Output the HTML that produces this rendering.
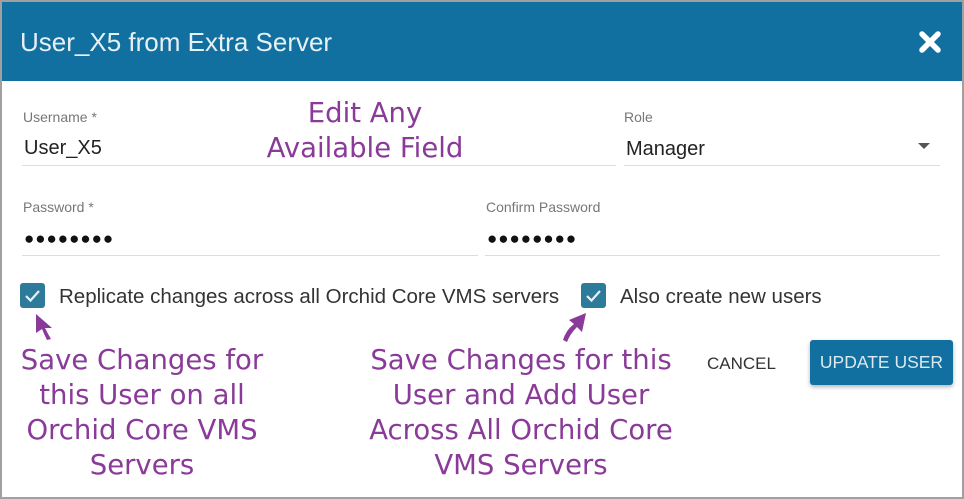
<!DOCTYPE html>
<html><head><style>
*{margin:0;padding:0;box-sizing:border-box}
body{width:964px;height:499px;background:#fff;font-family:"Liberation Sans",sans-serif;position:relative;overflow:hidden}
.frame{position:absolute;left:0;top:0;width:964px;height:499px;border:2px solid #a0a0a0}
.hdr{position:absolute;left:2px;top:2px;width:960px;height:79px;background:#1170a0}
.hdr .t{position:absolute;left:18px;top:25px;color:#e6f0f5;font-size:26px}
.x{position:absolute;right:20px;top:28px}
.lbl{position:absolute;font-size:14px;color:#777}
.val{position:absolute;font-size:20px;color:#222}
.ul{position:absolute;height:1px;background:#ddd}
.dots{position:absolute;font-size:17px;letter-spacing:1px;color:#111}
.cb{position:absolute;width:25px;height:25px;background:#2d7a9a;border-radius:3px}
.cbl{position:absolute;font-size:20.5px;color:#333}
.p{position:absolute;color:#8a3a98;font-size:27.5px;line-height:35px;text-align:center;font-family:"DejaVu Sans","Liberation Sans",sans-serif}
.btn{position:absolute;left:810px;top:340px;width:143px;height:45px;background:#1170a0;border-radius:3px;box-shadow:0 2px 4px rgba(0,0,0,.3);color:#dce9f0;font-size:17.5px;text-align:center;line-height:45px}
.cancel{position:absolute;left:707px;top:354px;font-size:17px;color:#333}
</style></head><body>
<div class="hdr"><div class="t">User_X5 from Extra Server</div>
<svg class="x" width="24" height="24" viewBox="0 0 24 24"><path d="M4 4L20 20M20 4L4 20" stroke="#fff" stroke-width="5.5" stroke-linecap="round"/></svg></div>
<div class="lbl" style="left:23px;top:109px">Username *</div>
<div class="val" style="left:24px;top:137px">User_X5</div>
<div class="ul" style="left:22px;top:165px;width:594px"></div>
<div class="lbl" style="left:624px;top:109px">Role</div>
<div class="val" style="left:626px;top:138px">Manager</div>
<svg style="position:absolute;left:918px;top:143px" width="12" height="7"><path d="M0 0H12L6 6Z" fill="#555"/></svg>
<div class="ul" style="left:624px;top:165px;width:316px"></div>
<div class="lbl" style="left:23px;top:199px">Password *</div>
<div class="dots" style="left:24px;top:229px">●●●●●●●●</div>
<div class="ul" style="left:22px;top:255px;width:456px"></div>
<div class="lbl" style="left:486px;top:199px">Confirm Password</div>
<div class="dots" style="left:487px;top:229px">●●●●●●●●</div>
<div class="ul" style="left:485px;top:255px;width:455px"></div>
<div class="p" style="left:235px;top:96px;width:260px">Edit Any<br>Available Field</div>
<div class="cb" style="left:20px;top:283px"><svg width="25" height="25"><path d="M6 13L10.5 17.5L19 8" stroke="#e8f0f4" stroke-width="2.2" fill="none"/></svg></div>
<div class="cbl" style="left:59px;top:285px">Replicate changes across all Orchid Core VMS servers</div>
<div class="cb" style="left:581px;top:283px"><svg width="25" height="25"><path d="M6 13L10.5 17.5L19 8" stroke="#e8f0f4" stroke-width="2.2" fill="none"/></svg></div>
<div class="cbl" style="left:620px;top:285px">Also create new users</div>
<svg style="position:absolute;left:30px;top:312px" width="30" height="40"><path d="M6 2L22 16L15 16Q18 22 21 27L17 28Q14 22 12 17L6 21Z" fill="#8a3a98"/></svg>
<svg style="position:absolute;left:560px;top:312px" width="30" height="40"><path d="M26 1L22 20L17 15Q10 22 7 30L3 28Q6 18 14 12L9 8Z" fill="#8a3a98"/></svg>
<div class="p" style="left:-18px;top:343px;width:320px">Save Changes for<br>this User on all<br>Orchid Core VMS<br>Servers</div>
<div class="p" style="left:331px;top:343px;width:380px">Save Changes for this<br>User and Add User<br>Across All Orchid Core<br>VMS Servers</div>
<div class="cancel">CANCEL</div>
<div class="btn">UPDATE USER</div>
<div class="frame"></div>
</body></html>
